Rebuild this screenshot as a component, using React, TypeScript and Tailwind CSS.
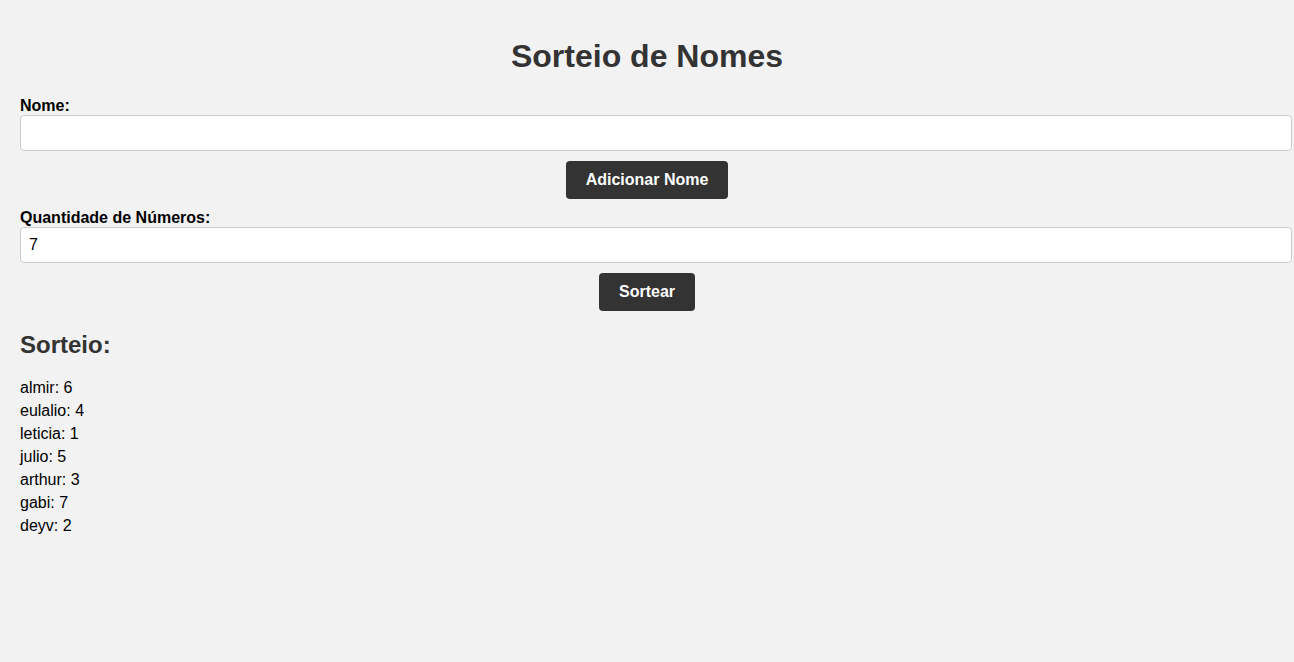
import { useState } from "react";

const RESULTS = [
  { name: "almir", value: 6 },
  { name: "eulalio", value: 4 },
  { name: "leticia", value: 1 },
  { name: "julio", value: 5 },
  { name: "arthur", value: 3 },
  { name: "gabi", value: 7 },
  { name: "deyv", value: 2 },
];

export default function App() {
  const [nome, setNome] = useState("");
  const [quantidade, setQuantidade] = useState("7");

  return (
    <main className="min-h-screen bg-[#f2f2f2] px-[20px] pb-[20px] font-['Liberation_Sans',Arial,sans-serif] text-black">
      <h1 className="pt-[38px] text-center text-[32px] font-bold leading-[37px] text-[#333]">
        Sorteio de Nomes
      </h1>

      <label htmlFor="nome" className="mt-[22px] block text-[16px] font-bold leading-[18px]">
        Nome:
      </label>
      <input
        id="nome"
        type="text"
        value={nome}
        onChange={(e) => setNome(e.target.value)}
        className="block h-[36px] w-[calc(100%+18px)] rounded-[4px] border border-[#ccc] bg-white px-[8px] text-[16px] outline-none"
      />
      <div className="mt-[10px] flex justify-center">
        <button
          type="button"
          className="h-[38px] rounded-[4px] bg-[#333] px-[20px] text-[16px] font-bold leading-[18px] text-white"
        >
          Adicionar Nome
        </button>
      </div>

      <label htmlFor="quantidade" className="mt-[10px] block text-[16px] font-bold leading-[18px]">
        Quantidade de Números:
      </label>
      <input
        id="quantidade"
        type="number"
        value={quantidade}
        onChange={(e) => setQuantidade(e.target.value)}
        className="block h-[36px] w-[calc(100%+18px)] appearance-none rounded-[4px] border border-[#ccc] bg-white px-[8px] text-[16px] outline-none [&::-webkit-inner-spin-button]:appearance-none"
      />
      <div className="mt-[10px] flex justify-center">
        <button
          type="button"
          className="h-[38px] rounded-[4px] bg-[#333] px-[20px] text-[16px] font-bold leading-[18px] text-white"
        >
          Sortear
        </button>
      </div>

      <h2 className="mt-[20px] text-[24px] font-bold leading-[28px] text-[#333]">Sorteio:</h2>
      <ul className="mt-[20px]">
        {RESULTS.map((r) => (
          <li key={r.name} className="mb-[5px] text-[16px] leading-[18px]">
            {r.name}: {r.value}
          </li>
        ))}
      </ul>
    </main>
  );
}
